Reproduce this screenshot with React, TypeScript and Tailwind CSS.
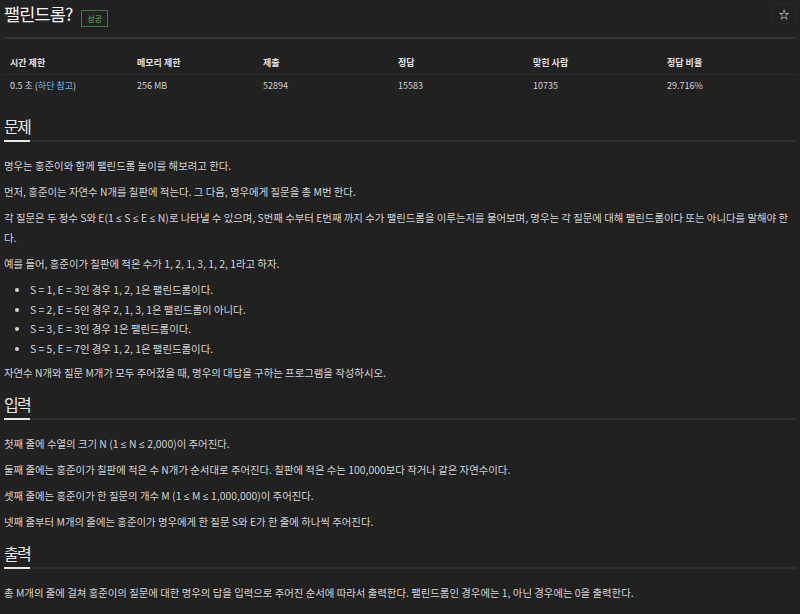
import React from 'react';

const stats = [
  { label: '시간 제한', value: 'time' },
  { label: '메모리 제한', value: '256 MB' },
  { label: '제출', value: '52894' },
  { label: '정답', value: '15583' },
  { label: '맞힌 사람', value: '10735' },
  { label: '정답 비율', value: '29.716%' },
];

// the CJK font draws ≤ at full width, so use a latin one for it
const Le = () => <span className="font-['Open_Sans']">≤</span>;

function SectionTitle({ title }: { title: string }) {
  return (
    <div className="mt-[10px] mb-[14px] border-b-2 border-[#2f2f2f]">
      <div className="-mb-[2px] inline-block border-b-2 border-[#e6e6e6] pb-[3px] text-[16px] leading-[22px] tracking-[-0.1em] text-[#e8e8e8]">
        {title}
      </div>
    </div>
  );
}

function P({ children }: { children: React.ReactNode }) {
  return <p className="mb-[6px] leading-[20px]">{children}</p>;
}

export default function App() {
  return (
    <div
      className="min-h-screen w-[800px] bg-[#212121] px-1 text-[10.4px] text-[#d2d2d2]"
      style={{ fontFamily: '"Noto Sans CJK KR", "Open Sans", sans-serif' }}
    >
      <div className="flex h-[37px] items-start justify-between">
        <div className="flex items-start pt-[2px]">
          <h1 className="text-[17.5px] leading-[24px] tracking-[-0.05em] text-[#f2f2f2]">팰린드롬?</h1>
          <span className="ml-[9px] mt-[8px] border border-[#3d7a3d] px-[5px] text-[8px] leading-[15px] text-[#5cb85c]">
            성공
          </span>
        </div>
        <div className="mt-[4px] flex h-[20px] w-[24px] items-center justify-center border border-[#282828] text-[11px] text-[#eee]">
          ☆
        </div>
      </div>
      <div className="h-[2px] bg-[#323232]" />

      <div className="mb-[17px] mt-[14px] grid grid-cols-[127px_126px_135px_135px_134px_1fr]">
        {stats.map((s) => (
          <div key={s.label} className="border-b border-[#2c2c2c] px-[6px] pb-[4px] pt-[3px] text-[9px] font-bold leading-[14px] text-[#e0e0e0]">
            {s.label}
          </div>
        ))}
        {stats.map((s) => (
          <div key={s.label} className="px-[6px] pb-[5px] pt-[4px] text-[9px] leading-[14px] text-[#d0d0d0]">
            {s.value === 'time' ? (
              <>
                0.5 초 (<span className="text-[#7ab6e6]">하단 참고</span>)
              </>
            ) : (
              s.value
            )}
          </div>
        ))}
      </div>

      <SectionTitle title="문제" />
      <P>명우는 홍준이와 함께 팰린드롬 놀이를 해보려고 한다.</P>
      <P>먼저, 홍준이는 자연수 N개를 칠판에 적는다. 그 다음, 명우에게 질문을 총 M번 한다.</P>
      <P>
        각 질문은 두 정수 S와 E(1 <Le /> S <Le /> E <Le /> N)로 나타낼 수 있으며, S번째 수부터 E번째 까지 수가 팰린드롬을 이루는지를 물어보며, 명우는 각 질문에 대해 팰린드롬이다 또는 아니다를 말해야 한다.
      </P>
      <P>예를 들어, 홍준이가 칠판에 적은 수가 1, 2, 1, 3, 1, 2, 1라고 하자.</P>
      <ul className="mb-[5px] list-disc pl-[26px] leading-[19.6px]">
        <li>S = 1, E = 3인 경우 1, 2, 1은 팰린드롬이다.</li>
        <li>S = 2, E = 5인 경우 2, 1, 3, 1은 팰린드롬이 아니다.</li>
        <li>S = 3, E = 3인 경우 1은 팰린드롬이다.</li>
        <li>S = 5, E = 7인 경우 1, 2, 1은 팰린드롬이다.</li>
      </ul>
      <P>자연수 N개와 질문 M개가 모두 주어졌을 때, 명우의 대답을 구하는 프로그램을 작성하시오.</P>

      <SectionTitle title="입력" />
      <P>첫째 줄에 수열의 크기 N (1 <Le /> N <Le /> 2,000)이 주어진다.</P>
      <P>둘째 줄에는 홍준이가 칠판에 적은 수 N개가 순서대로 주어진다. 칠판에 적은 수는 100,000보다 작거나 같은 자연수이다.</P>
      <P>셋째 줄에는 홍준이가 한 질문의 개수 M (1 <Le /> M <Le /> 1,000,000)이 주어진다.</P>
      <P>넷째 줄부터 M개의 줄에는 홍준이가 명우에게 한 질문 S와 E가 한 줄에 하나씩 주어진다.</P>

      <SectionTitle title="출력" />
      <P>총 M개의 줄에 걸쳐 홍준이의 질문에 대한 명우의 답을 입력으로 주어진 순서에 따라서 출력한다. 팰린드롬인 경우에는 1, 아닌 경우에는 0을 출력한다.</P>
    </div>
  );
}
